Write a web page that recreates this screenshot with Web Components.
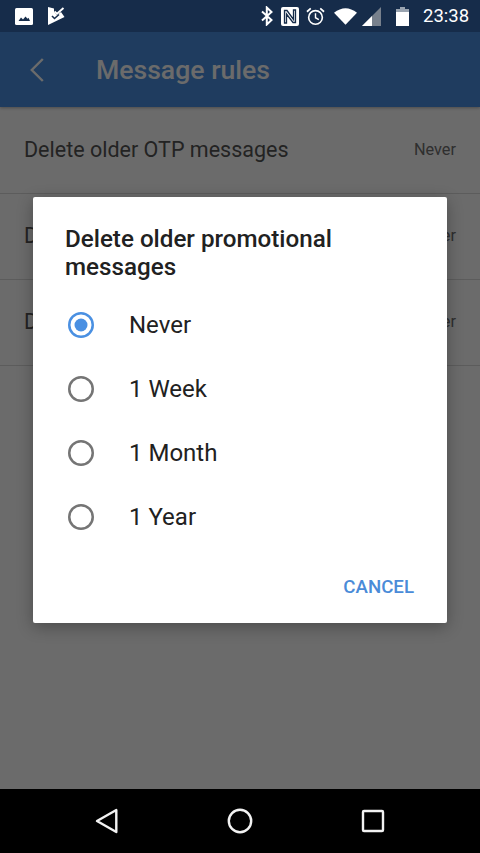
<!DOCTYPE html>
<html>
<head>
<meta charset="utf-8">
<title>Message rules</title>
<style>
    html, body { margin: 0; padding: 0; background: #000; }
    body { font-family: Roboto, "Liberation Sans", sans-serif; }
    phone-screen { width: 480px; height: 853px; }
</style>
</head>
<body>
<phone-screen>
    <status-bar slot="status" time="23:38"></status-bar>
    <app-bar slot="content" title="Message rules"></app-bar>
    <rule-row slot="content" label="Delete older OTP messages" value="Never"></rule-row>
    <rule-row slot="content" label="Delete older promotional messages" value="Never"></rule-row>
    <rule-row slot="content" label="Delete older transactional messages" value="Never"></rule-row>
    <message-dialog slot="overlay" title="Delete older promotional messages" action="CANCEL">
        <radio-option checked>Never</radio-option>
        <radio-option>1 Week</radio-option>
        <radio-option>1 Month</radio-option>
        <radio-option>1 Year</radio-option>
    </message-dialog>
    <nav-bar slot="nav"></nav-bar>
</phone-screen>

<script>
class PhoneScreen extends HTMLElement {
    constructor() {
        super();
        this.attachShadow({ mode: 'open' });
        this.shadowRoot.innerHTML = `
            <style>
                :host { display: flex; flex-direction: column; overflow: hidden; }
                .main { flex: 1; position: relative; background: #fff; overflow: hidden; }
                .scrim {
                    position: absolute; inset: 0;
                    background: rgba(0, 0, 0, 0.58);
                    display: flex; align-items: center; justify-content: center;
                }
            </style>
            <slot name="status"></slot>
            <div class="main">
                <slot name="content"></slot>
                <div class="scrim"><slot name="overlay"></slot></div>
            </div>
            <slot name="nav"></slot>
        `;
    }
}

class StatusBar extends HTMLElement {
    constructor() {
        super();
        this.attachShadow({ mode: 'open' });
    }

    connectedCallback() {
        this.shadowRoot.innerHTML = `
            <style>
                :host {
                    display: flex; align-items: center; height: 32px; flex: none;
                    background: #162c4a; color: #fff;
                    font: 400 18.5px Roboto, sans-serif;
                }
                svg { display: block; flex: none; }
                .left { display: flex; align-items: center; gap: 15px; margin-left: 15px; }
                .right { display: flex; align-items: center; margin-left: auto; margin-right: 11px; }
                .time { margin-left: 14px; width: 46px; white-space: nowrap; }
            </style>
            <div class="left">
                <svg width="18" height="17" viewBox="0 0 18 17">
                    <rect width="18" height="17" rx="1.5" fill="#fff"/>
                    <path d="M3.5 13 L6 9.5 L8 11.5 L10.5 8.5 L12.5 10.8 L13.5 9.8 L15 13 Z" fill="#162c4a"/>
                </svg>
                <svg width="17" height="18" viewBox="0 0 17 18">
                    <path d="M0 0 L6 1.5 V5 L9 8 L13 5 L16.5 10 L0 18 Z" fill="#fff"/>
                    <path d="M6.5 4.5 L9 6.8 L15.5 1" fill="none" stroke="#fff" stroke-width="1.9"/>
                    <path d="M4 9 L6.5 11.5 L11 7.5" fill="none" stroke="#162c4a" stroke-width="1.6"/>
                </svg>
            </div>
            <div class="right">
                <svg width="12" height="20" viewBox="0 0 12 20" style="margin-right:8px">
                    <path d="M1 5.5 L10.5 14 L5.8 18.5 V1.5 L10.5 6 L1 14.5" fill="none" stroke="#fff" stroke-width="2"/>
                </svg>
                <svg width="18" height="19" viewBox="0 0 18 19" style="margin-right:7px">
                    <rect width="18" height="19" rx="2" fill="#fff"/>
                    <path d="M3.5 16 V3.5 H6 L12.5 12.5 V3 H14.5 V15.5 H12 L5.5 7 V16 Z" fill="none" stroke="#162c4a" stroke-width="1.3"/>
                </svg>
                <svg width="19" height="19" viewBox="0 0 20 20" style="margin-right:9px">
                    <circle cx="10" cy="11" r="7.2" fill="none" stroke="#fff" stroke-width="1.7"/>
                    <path d="M10 6.5 V11.3 L13.5 13.3" fill="none" stroke="#fff" stroke-width="1.5"/>
                    <path d="M1 5 L5 1.5 M19 5 L15 1.5" stroke="#fff" stroke-width="1.8"/>
                </svg>
                <svg width="23" height="18" viewBox="0 0 25 19" style="margin-right:5px">
                    <path d="M0 6 Q12.5 -4 25 6 L12.5 19 Z" fill="#fff"/>
                </svg>
                <svg width="19" height="19" viewBox="0 0 19 19" style="margin-right:15px">
                    <path d="M0 19 L19 0 V19 Z" fill="#77808c"/>
                    <path d="M0 19 L10 9 V19 Z" fill="#fff"/>
                </svg>
                <svg width="13" height="19" viewBox="0 0 13 19">
                    <path d="M4 0 H9 V2 H13 V19 H0 V2 H4 Z" fill="#fff"/>
                    <rect y="2" width="13" height="3" fill="#9aa4b0"/>
                    <rect x="4" width="5" height="2" fill="#9aa4b0"/>
                </svg>
                <span class="time">${this.getAttribute('time')}</span>
            </div>
        `;
    }
}

class AppBar extends HTMLElement {
    constructor() {
        super();
        this.attachShadow({ mode: 'open' });
    }

    connectedCallback() {
        this.shadowRoot.innerHTML = `
            <style>
                :host {
                    display: flex; align-items: center; height: 75px; margin-bottom: 1px;
                    background: #4a90e2; color: #fff;
                    box-shadow: 0 1px 3px rgba(0, 0, 0, 0.3);
                    position: relative;
                    font: 500 26.6px Roboto, sans-serif;
                }
                svg { margin-left: 30px; flex: none; }
                .title { margin-left: 52px; }
            </style>
            <svg width="14" height="24" viewBox="0 0 14 24">
                <path d="M12.8 1 L1.8 12 L12.8 23" fill="none" stroke="#fff" stroke-width="2.4"/>
            </svg>
            <span class="title">${this.getAttribute('title')}</span>
        `;
    }
}

class RuleRow extends HTMLElement {
    constructor() {
        super();
        this.attachShadow({ mode: 'open' });
    }

    connectedCallback() {
        this.shadowRoot.innerHTML = `
            <style>
                :host {
                    display: flex; align-items: center; justify-content: space-between;
                    height: 83px; padding: 0 24px 2px; border-bottom: 1px solid #dcdcdc;
                    font-family: Roboto, sans-serif; background: #fff;
                }
                .label { font-size: 21.5px; color: #555; }
                .value { font-size: 16.3px; color: #707070; }
            </style>
            <span class="label">${this.getAttribute('label')}</span>
            <span class="value">${this.getAttribute('value')}</span>
        `;
    }
}

class MessageDialog extends HTMLElement {
    constructor() {
        super();
        this.attachShadow({ mode: 'open' });
    }

    connectedCallback() {
        this.shadowRoot.innerHTML = `
            <style>
                :host {
                    display: flex; flex-direction: column; box-sizing: border-box;
                    width: 414px; height: 426px; margin-bottom: 1px;
                    background: #fff; border-radius: 2px;
                    box-shadow: 0 4px 16px rgba(0, 0, 0, 0.3);
                    font-family: Roboto, sans-serif;
                }
                h2 {
                    margin: 0; padding: 28px 32px 0; height: 68px;
                    font-size: 24.2px; font-weight: 500; line-height: 28px; color: #212121;
                }
                .options { display: flex; flex-direction: column; }
                .action {
                    margin-top: auto; padding: 0 33px 25px; text-align: right;
                    font-size: 18.7px; font-weight: 500; line-height: 22px; color: #4a8bd8;
                }
            </style>
            <h2>${this.getAttribute('title')}</h2>
            <div class="options"><slot></slot></div>
            <div class="action">${this.getAttribute('action')}</div>
        `;
    }
}

class RadioOption extends HTMLElement {
    constructor() {
        super();
        this.attachShadow({ mode: 'open' });
    }

    connectedCallback() {
        const on = this.hasAttribute('checked');
        const color = on ? '#4a90e2' : '#757575';
        this.shadowRoot.innerHTML = `
            <style>
                :host {
                    display: flex; align-items: center; height: 64px; padding-left: 35px;
                    font: 400 24px Roboto, sans-serif; color: #212121;
                }
                svg { flex: none; margin-right: 35px; }
            </style>
            <svg width="26" height="26" viewBox="0 0 26 26">
                <circle cx="13" cy="13" r="11.75" fill="none" stroke="${color}" stroke-width="2.5"/>
                ${on ? `<circle cx="13" cy="13" r="6.5" fill="${color}"/>` : ''}
            </svg>
            <slot></slot>
        `;
    }
}

class NavBar extends HTMLElement {
    constructor() {
        super();
        this.attachShadow({ mode: 'open' });
        this.shadowRoot.innerHTML = `
            <style>
                :host {
                    display: flex; align-items: center; justify-content: center;
                    height: 64px; flex: none; background: #000;
                }
                .key { width: 133px; display: flex; justify-content: center; }
                svg { display: block; }
            </style>
            <div class="key"><svg width="24" height="26" viewBox="0 0 24 26">
                <path d="M21.3 2 V24 L2 13 Z" fill="none" stroke="#f2f2f2" stroke-width="2.4" stroke-linejoin="round"/>
            </svg></div>
            <div class="key"><svg width="26" height="26" viewBox="0 0 26 26">
                <circle cx="13" cy="13" r="11.2" fill="none" stroke="#f2f2f2" stroke-width="2.4"/>
            </svg></div>
            <div class="key"><svg width="24" height="24" viewBox="0 0 24 24">
                <rect x="2" y="2" width="20" height="20" rx="1" fill="none" stroke="#f2f2f2" stroke-width="2.4"/>
            </svg></div>
        `;
    }
}

customElements.define('phone-screen', PhoneScreen);
customElements.define('status-bar', StatusBar);
customElements.define('app-bar', AppBar);
customElements.define('rule-row', RuleRow);
customElements.define('message-dialog', MessageDialog);
customElements.define('radio-option', RadioOption);
customElements.define('nav-bar', NavBar);
</script>
</body>
</html>
